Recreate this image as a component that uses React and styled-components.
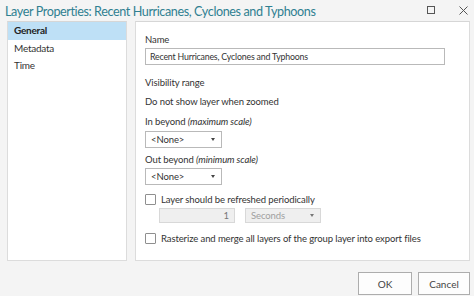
import React from "react";
import styled, { createGlobalStyle } from "styled-components";

const Global = createGlobalStyle`
  html, body { margin: 0; padding: 0; }
  body {
    width: 474px; height: 296px; overflow: hidden;
    background: #f4f4f4;
    font-family: "Lato", "Open Sans", sans-serif;
    color: #333;
  }
  * { box-sizing: border-box; }
`;

const Window = styled.div`
  width: 474px; height: 296px;
  display: flex; flex-direction: column;
  background: #f4f4f4;
`;

const TitleBar = styled.div`
  height: 21px;
  display: flex; align-items: center;
  padding: 0 6px 0 5px;
`;

const Title = styled.div`
  flex: 1;
  font-size: 12.6px;
  letter-spacing: -0.4px;
  color: #2f8091;
  white-space: nowrap;
  line-height: 21px;
  margin-top: 1px;
`;

const Controls = styled.div`
  display: flex; align-items: center; gap: 24px;
  margin-top: -1px;
`;

const Body = styled.div`
  height: 240px;
  display: flex; gap: 8px;
  padding: 0 4px 0 7px;
`;

const Nav = styled.div`
  width: 120px;
  background: #fff;
  border: 1px solid #dcdcdc;
  border-top-color: #d6d6d6;
  display: flex; flex-direction: column;
`;

const NavItem = styled.div`
  height: 17.5px;
  line-height: 17px;
  padding-left: 6px;
  font-size: 10px;
  letter-spacing: -0.25px;
  font-weight: ${(p) => (p.$active ? 700 : 400)};
  color: ${(p) => (p.$active ? "#222" : "#333")};
  background: ${(p) => (p.$active ? "#bee0f6" : "transparent")};
`;

const Panel = styled.div`
  flex: 1;
  background: #fff;
  border: 1px solid #dcdcdc;
  border-top-color: #d6d6d6;
  padding: 11px 0 0 9px;
  display: flex; flex-direction: column;
  font-size: 9.5px;
  letter-spacing: -0.1px;
`;

const Label = styled.div`
  line-height: 14px;
  margin-top: ${(p) => p.$mt || 0}px;
  white-space: nowrap;
  em { font-style: italic; }
`;

const TextBox = styled.div`
  width: 300px; height: 17px;
  margin-top: ${(p) => p.$mt || 0}px;
  border: 1px solid #b9b9b9;
  font-size: 8.8px;
  letter-spacing: -0.2px;
  line-height: 15px;
  padding-left: 4px;
  white-space: nowrap;
`;

const Select = styled.div`
  width: ${(p) => p.$w || 77}px;
  height: ${(p) => p.$h || 17}px;
  margin-top: ${(p) => p.$mt || 0}px;
  margin-left: ${(p) => p.$ml || 0}px;
  border: 1px solid ${(p) => (p.$disabled ? "#d8d8d8" : "#b9b9b9")};
  background: ${(p) => (p.$disabled ? "#efefef" : "#fff")};
  color: ${(p) => (p.$disabled ? "#a0a0a0" : "#333")};
  display: flex; align-items: center; justify-content: space-between;
  padding: 0 6px 0 5px;
`;

const Arrow = styled.span`
  width: 0; height: 0;
  border-left: 2px solid transparent;
  border-right: 2px solid transparent;
  border-top: 3px solid ${(p) => (p.$disabled ? "#777" : "#444")};
`;

const CheckRow = styled.div`
  display: flex; align-items: center; gap: 5px;
  height: 14px;
  margin-top: ${(p) => p.$mt || 0}px;
  white-space: nowrap;
`;

const Box = styled.span`
  width: 11px; height: 11px;
  border: 1px solid #8f8f8f;
  border-radius: 1px;
  background: #fff;
  flex: none;
`;

const Indented = styled.div`
  display: flex;
  margin-top: ${(p) => p.$mt || 0}px;
  padding-left: 14px;
`;

const NumberBox = styled.div`
  width: 76px; height: 15px;
  border: 1px solid #d8d8d8;
  background: #efefef;
  color: #777;
  text-align: right;
  padding-right: 5px;
  line-height: 13px;
`;

const Footer = styled.div`
  flex: 1;
  display: flex; justify-content: flex-end; align-items: flex-start;
  gap: 6px;
  padding: 11px 4px 0 0;
`;

const Button = styled.div`
  width: ${(p) => p.$w}px; height: 23px;
  border: 1px solid #adadad;
  background: #fdfdfd;
  font-size: 10px;
  color: #444;
  display: flex; align-items: center; justify-content: center;
`;

export default function App() {
  return (
    <Window>
      <Global />
      <TitleBar>
        <Title>Layer Properties: Recent Hurricanes, Cyclones and Typhoons</Title>
        <Controls>
          <svg width="8" height="8" viewBox="0 0 8 8">
            <rect x="0.5" y="0.5" width="7" height="7" fill="none" stroke="#555" strokeWidth="1" />
          </svg>
          <svg width="9" height="9" viewBox="0 0 9 9">
            <path d="M0.5 0.5 L8.5 8.5 M8.5 0.5 L0.5 8.5" stroke="#555" strokeWidth="1" fill="none" />
          </svg>
        </Controls>
      </TitleBar>
      <Body>
        <Nav>
          <NavItem $active>General</NavItem>
          <NavItem>Metadata</NavItem>
          <NavItem>Time</NavItem>
        </Nav>
        <Panel>
          <Label>Name</Label>
          <TextBox $mt={1}>Recent Hurricanes, Cyclones and Typhoons</TextBox>
          <Label $mt={11}>Visibility range</Label>
          <Label $mt={5}>Do not show layer when zoomed</Label>
          <Label $mt={6}>In beyond <em>(maximum scale)</em></Label>
          <Select $mt={2}>
            &lt;None&gt;
            <Arrow />
          </Select>
          <Label $mt={5}>Out beyond <em>(minimum scale)</em></Label>
          <Select $mt={1}>
            &lt;None&gt;
            <Arrow />
          </Select>
          <CheckRow $mt={7}>
            <Box />
            Layer should be refreshed periodically
          </CheckRow>
          <Indented $mt={2}>
            <NumberBox>1</NumberBox>
            <Select $disabled $w={76} $h={15} $ml={10}>
              Seconds
              <Arrow $disabled />
            </Select>
          </Indented>
          <CheckRow $mt={8}>
            <Box />
            Rasterize and merge all layers of the group layer into export files
          </CheckRow>
        </Panel>
      </Body>
      <Footer>
        <Button $w={54}>OK</Button>
        <Button $w={52}>Cancel</Button>
      </Footer>
    </Window>
  );
}
